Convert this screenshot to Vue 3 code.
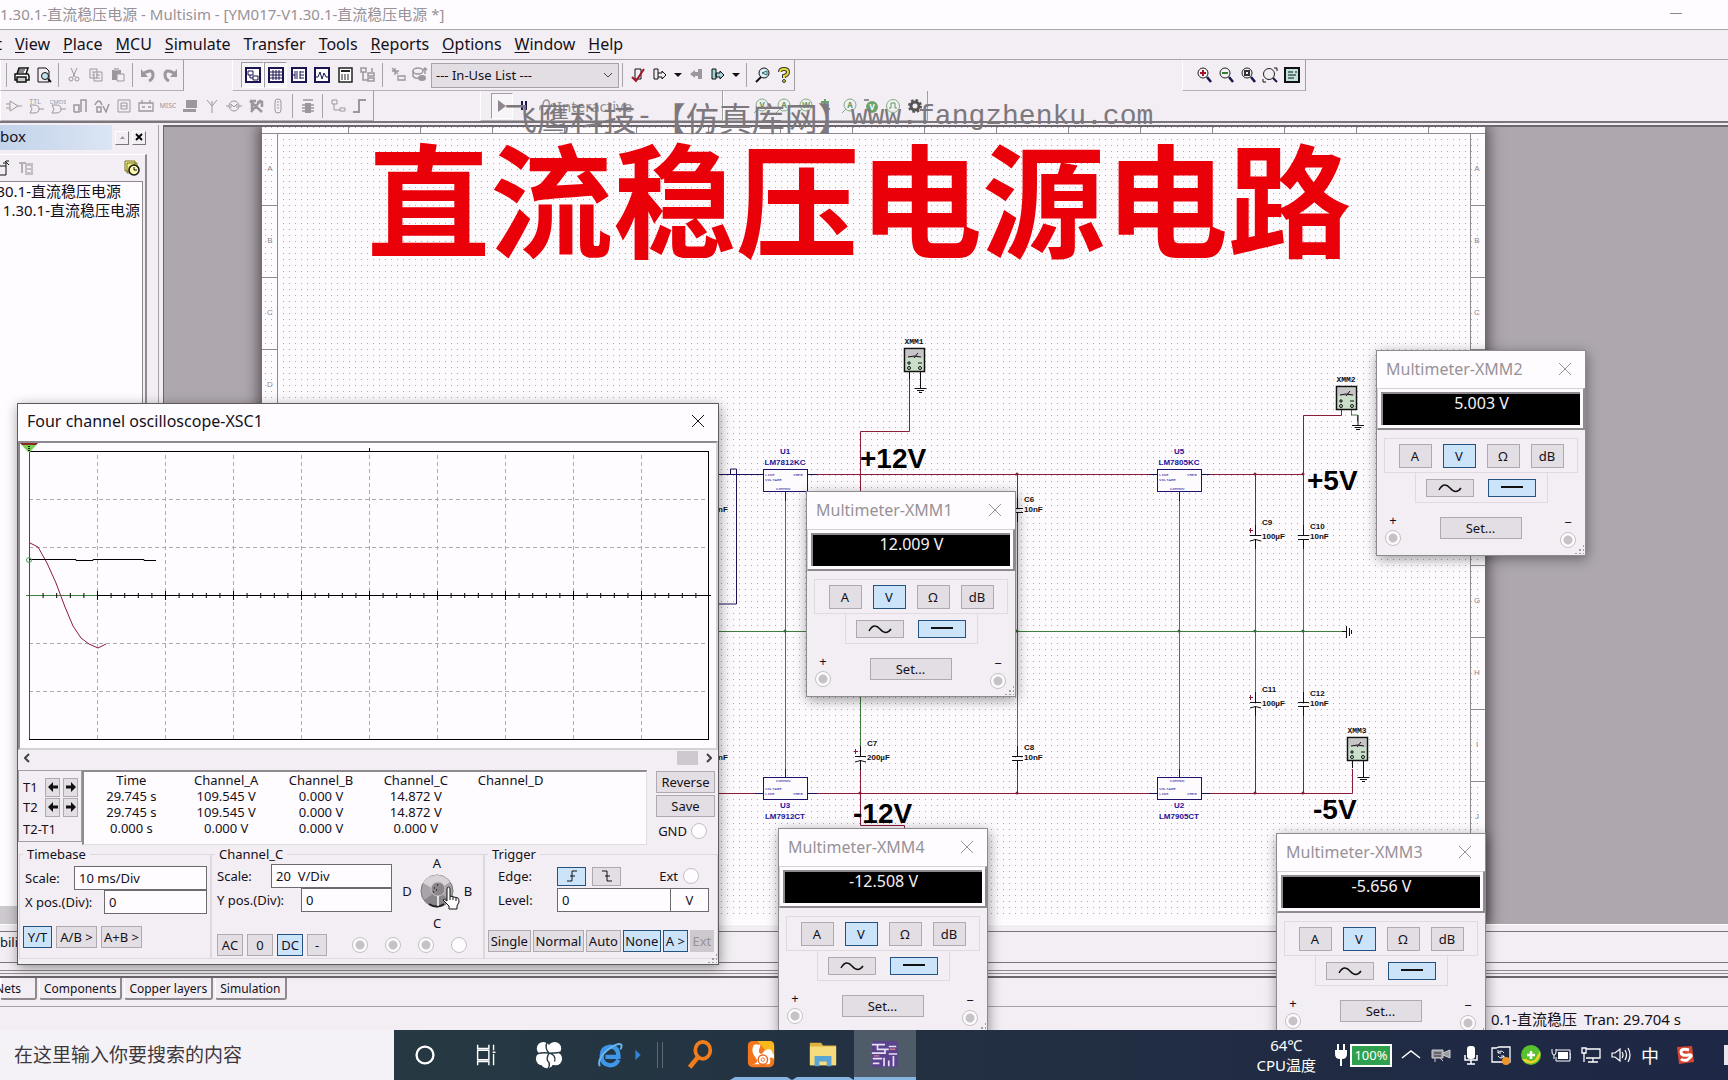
<template>
  <div class="app">
    <!-- title bar -->
    <header class="titlebar">
      <span>1.30.1-直流稳压电源 - Multisim - [YM017-V1.30.1-直流稳压电源 *]</span>
      <button class="minimize" aria-label="Minimize"></button>
    </header>

    <!-- menu -->
    <nav class="menubar">
      <button v-for="item in menus" :key="item[0] + item[1]" class="menu-item">
        {{ item[0] }}<u>{{ item[1] }}</u>{{ item[2] }}
      </button>
    </nav>

    <!-- toolbars -->
    <div class="toolbar-row">
      <div class="toolbar file-bar">
        <template v-for="(name, i) in fileIcons" :key="i">
          <span v-if="name === '|'" class="divider"></span>
          <button v-else class="tool"><svg viewBox="0 0 16 16" v-html="icons[name]"></svg></button>
        </template>
      </div>
      <div class="toolbar main-bar">
        <template v-for="(name, i) in viewIcons" :key="i">
          <span v-if="name === '|'" class="divider"></span>
          <button v-else class="tool" :class="{ pressed: i < 2, wide: i < 7 }"><svg viewBox="0 0 16 16" v-html="icons[name]"></svg></button>
        </template>
        <select class="in-use" aria-label="In-Use List">
          <option>--- In-Use List ---</option>
        </select>
        <template v-for="(name, i) in designIcons" :key="'d' + i">
          <span v-if="name === '|'" class="divider"></span>
          <span v-else-if="name === 'v'" class="caret"></span>
          <button v-else class="tool"><svg viewBox="0 0 16 16" v-html="icons[name]"></svg></button>
        </template>
      </div>
      <div class="toolbar zoom-bar">
        <button v-for="name in zoomIcons" :key="name" class="tool"><svg viewBox="0 0 16 16" v-html="icons[name]"></svg></button>
      </div>
    </div>
    <div class="toolbar-row second">
      <div class="toolbar parts-bar">
        <template v-for="(name, i) in partIcons" :key="i">
          <span v-if="name === '|'" class="divider"></span>
          <button v-else class="tool"><svg viewBox="0 0 16 16" v-html="icons[name]"></svg></button>
        </template>
      </div>
      <div class="toolbar sim-bar">
        <button class="tool pressed"><svg viewBox="0 0 16 16"><path d="M4 2l8 6-8 6z" fill="#8d888d" /></svg></button>
        <button class="tool"><svg viewBox="0 0 16 16"><path d="M5 3h2v9H5zM9 3h2v9H9z" fill="#1a1550" /></svg></button>
        <button class="tool"><svg viewBox="0 0 16 16" v-html="icons.interactive"></svg></button>
        <span class="sim-name">Interactive</span>
      </div>
      <div class="toolbar probe-bar">
        <button v-for="name in probeIcons" :key="name" class="tool"><svg viewBox="0 0 16 16" v-html="icons[name]"></svg></button>
      </div>
    </div>

    <!-- work area -->
    <main class="work">
      <aside class="toolbox">
        <div class="toolbox-head">
          <span class="toolbox-title">box</span>
          <button class="mini"><svg viewBox="0 0 9 9"><path d="M2 6l2.500-3 2.500 3z" fill="#999" /></svg></button>
          <button class="mini"><svg viewBox="0 0 9 9"><path d="M1 1l6 6M7 1l-6 6" stroke="#000" stroke-width="1.800" /></svg></button>
        </div>
        <div class="toolbox-body">
          <div class="toolbox-tools">
            <svg viewBox="0 0 16 16"><path d="M-2 6h8v9h-8M6 6V3h-3M5 1l4 4M6 1h3" fill="none" stroke="#111" /></svg>
            <svg viewBox="0 0 16 16"><path d="M1 3h7M4 3v10" fill="none" stroke="#b3aeb3" stroke-width="2" /><path d="M7 3h8v12H7z" fill="#c3bfc3" /><path d="M9 6h4v2H9zM9 10h4v2H9z" fill="#f2eef3" /></svg>
            <svg class="history" viewBox="0 0 16 16"><path d="M1 1h10v10H1zM3 3h10v10H3z" fill="#f2f08a" stroke="#7a7420" /><circle cx="10" cy="10" r="5" fill="#fbf7b0" stroke="#111" stroke-width="1.500" /><path d="M10 7v3h3" fill="none" stroke="#111" /></svg>
          </div>
          <div class="tree">
            <span class="tree-row first">30.1-直流稳压电源</span>
            <span class="tree-row">1.30.1-直流稳压电源</span>
          </div>
          <div class="tree-scroll"></div>
        </div>
      </aside>

      <section class="canvas">
        <svg class="sheet" viewBox="262 127 1223 797" width="1223" height="797">
          <defs>
            <pattern id="dots" width="6" height="6" patternUnits="userSpaceOnUse">
              <rect x="1" y="1" width="1" height="1" fill="#b3a4b6" />
            </pattern>
          </defs>
          <rect x="262" y="127" width="1223" height="797" fill="#fefbff" />
          <rect x="265" y="127" width="1218" height="792" fill="url(#dots)" />
          <!-- sheet frame -->
          <path d="M277.500 924V133.500H1470.500V924M262 133.500H277M1470 133.500h15" class="frame" />
          <path v-for="n in 16" :key="'c' + n" :d="`M${276.5 + n * 72} 127v6`" class="frame" />
          <template v-for="(letter, n) in rows" :key="letter">
            <path :d="`M262 ${205.5 + n * 72}h15M1470 ${205.5 + n * 72}h15`" class="frame" />
            <text x="270" :y="171 + n * 72" class="mark">{{ letter }}</text>
            <text x="1477" :y="171 + n * 72" class="mark">{{ letter }}</text>
          </template>

          <text x="367" y="248" class="headline">直流稳压电源电路</text>

          <!-- nets -->
          <g class="wire red">
            <path d="M817 474.500h332M1210 474.500h93M860.500 500V431.500h49V372" />
            <path d="M1017.500 474v26M1255.500 474v52M1303.500 526V415.500h38v-6" />
            <path d="M719 793.500h36M817 793.500h332M1210 793.500h142.500V769" />
            <path d="M860.500 768v57.500h44v6M1017.500 768v25M1255.500 714v79M1303.500 714v79" />
          </g>
          <g class="wire green">
            <path d="M719 631.500h624M785.500 500v269M1179.500 500v269" />
            <path d="M860.500 640v107M1017.500 520v227M1255.500 548v146M1303.500 548v146M1351.500 409v6h6v6" />
          </g>
          <g class="wire navy">
            <path d="M719 474.500h44M807 474.500h10M1149 474.500h8M1201 474.500h9M755 793.500h8M807 793.500h10M1149 793.500h8M1201 793.500h9" />
            <path d="M730.500 474v-5h6v135h-18M785.500 492v9M1179.500 492v9M785.500 769v8M1179.500 769v8" />
          </g>
          <g fill="#8b1c3a">
            <circle cx="1017" cy="474" r="1.500" /><circle cx="1255" cy="474" r="1.500" /><circle cx="1303" cy="474" r="1.500" />
            <circle cx="860" cy="793" r="1.500" /><circle cx="1017" cy="793" r="1.500" /><circle cx="1255" cy="793" r="1.500" /><circle cx="1303" cy="793" r="1.500" />
          </g>
          <g fill="#2f6d33">
            <circle cx="785" cy="631" r="1.500" /><circle cx="1017" cy="631" r="1.500" /><circle cx="1179" cy="631" r="1.500" />
            <circle cx="1255" cy="631" r="1.500" /><circle cx="1303" cy="631" r="1.500" />
          </g>
          <path d="M1342 631.500h4M1346.500 626v12M1349.500 628v8M1351.500 630v4" class="wire black" />

          <!-- regulators -->
          <g v-for="u in regulators" :key="u.id" class="regulator">
            <rect :x="u.x - 21.5" :y="u.y - 0.5" width="44" height="22" />
            <template v-if="u.up">
              <text :x="u.x" :y="u.y - 16" class="ref">{{ u.id }}</text>
              <text :x="u.x" :y="u.y - 5" class="ref">{{ u.type }}</text>
              <text :x="u.x - 20" :y="u.y + 6" class="pin">LINE</text>
              <text :x="u.x + 8" :y="u.y + 6" class="pin">VREG</text>
              <text :x="u.x - 20" :y="u.y + 11" class="pin">VOLTAGE</text>
              <text :x="u.x - 9" :y="u.y + 20" class="pin">COMMON</text>
            </template>
            <template v-else>
              <text :x="u.x - 9" :y="u.y + 4" class="pin">COMMON</text>
              <text :x="u.x - 20" :y="u.y + 12" class="pin">VOLTAGE</text>
              <text :x="u.x - 20" :y="u.y + 17" class="pin">LINE</text>
              <text :x="u.x + 8" :y="u.y + 17" class="pin">VREG</text>
              <text :x="u.x" :y="u.y + 30" class="ref">{{ u.id }}</text>
              <text :x="u.x" :y="u.y + 41" class="ref">{{ u.type }}</text>
            </template>
          </g>

          <!-- capacitors -->
          <g v-for="c in capacitors" :key="c.id">
            <path :d="`M${c.x + 0.5} ${c.y - 10}v10M${c.x + 0.5} ${c.y + 4}v10M${c.x - 5} ${c.y + 0.5}h11`" class="wire black" />
            <path v-if="c.polar" :d="`M${c.x - 5} ${c.y + 6}q5.500 -3 11 0`" class="wire black" />
            <path v-else :d="`M${c.x - 5} ${c.y + 4.5}h11`" class="wire black" />
            <path v-if="c.polar" :d="`M${c.x - 6} ${c.y - 4.500}h4M${c.x - 4.5} ${c.y - 7}v5`" class="wire red" />
            <text :x="c.x + 7" :y="c.polar ? c.y - 10 : c.y - 6" class="cap">{{ c.id }}</text>
            <text :x="c.x + 7" :y="c.y + 4" class="cap">{{ c.value }}</text>
          </g>
          <text x="718" y="512" class="cap">nF</text>
          <text x="718" y="760" class="cap">nF</text>

          <!-- multimeter symbols -->
          <g v-for="m in meterSymbols" :key="m.id" :transform="`translate(${m.x} ${m.y})`">
            <text x="10" y="-4" class="meter-ref">{{ m.id }}</text>
            <rect x="0.500" y="0.500" width="20" height="23" fill="#c9dfca" stroke="#111" stroke-width="1.500" />
            <rect x="2" y="2" width="17" height="8" fill="#c8c4c8" />
            <path d="M4 9q6-2 13 0M10 10l4-5M3 15h4M5 13v4M14 15h4" class="wire black" />
            <circle cx="5" cy="20" r="1.500" class="wire black" /><circle cx="16" cy="20" r="1.500" class="wire black" />
            <path v-if="m.bend" d="M22 29v10M16 39.500h12M18.500 41.500h7M20 43.500h4" class="wire black" />
            <path v-else d="M16.500 24v16M5.500 24v7M10.500 40.500h12M13 42.500h7M15 44.500h3" class="wire black" />
          </g>

          <text x="860" y="468" class="volt">+12V</text>
          <text x="1307" y="490" class="volt">+5V</text>
          <text x="853" y="823" class="volt">-12V</text>
          <text x="1313" y="819" class="volt">-5V</text>
        </svg>
      </section>
    </main>

    <!-- bottom area -->
    <div class="spread">
      <span class="spread-tab">bili</span>
    </div>
    <div class="splitter"></div>
    <div class="sheet-tabs">
      <button v-for="tab in tabs" :key="tab" class="sheet-tab">{{ tab }}</button>
    </div>
    <footer class="status">
      <span>0.1-直流稳压</span>
      <span>Tran: 29.704 s</span>
    </footer>

    <!-- taskbar -->
    <div class="taskbar">
      <input class="search" type="text" aria-label="搜索" placeholder="在这里输入你要搜索的内容">
      <button v-for="app in apps" :key="app.name" class="app-btn" :class="[app.name, { open: app.open }]" :aria-label="app.name">
        <svg viewBox="0 0 32 32" v-html="app.icon"></svg>
      </button>
      <div class="tray">
        <div class="cpu"><span>64℃</span><span>CPU温度</span></div>
        <svg class="plug" viewBox="0 0 14 22"><path d="M3 0h2v6h4V0h2v6h2v4q0 5-5 5v7H6v-7q-5 0-5-5V6h2z" fill="#fff" /></svg>
        <div class="battery">100%</div>
        <svg v-for="(icon, i) in trayIcons" :key="i" class="tray-icon" viewBox="0 0 20 20" v-html="icon"></svg>
        <span class="ime">中</span>
        <svg class="sogou" viewBox="0 0 20 20"><path d="M2 2l15-1 2 16-15 2z" fill="#d8452f" /><path d="M14 5q-8-2-8 2t7 3-1 5q-4 1-6-1" fill="none" stroke="#fff" stroke-width="3" /></svg>
        <span class="show-desktop"></span>
      </div>
    </div>

    <!-- oscilloscope -->
    <section class="window scope">
      <div class="win-title">
        <span>Four channel oscilloscope-XSC1</span>
        <button class="close" aria-label="Close"><svg viewBox="0 0 12 12"><path d="M0 0l12 12M12 0L0 12" /></svg></button>
      </div>
      <svg class="screen" viewBox="20 443 696 305">
        <rect x="29.500" y="451.500" width="679" height="288" fill="none" stroke="#000" />
        <g stroke="#b3a9b5" stroke-dasharray="4 3">
          <path v-for="n in 9" :key="'x' + n" :d="`M${29.5 + n * 68} 455v284`" />
          <path v-for="y in [499.5, 547.5, 643.5, 691.5]" :key="y" :d="`M29 ${y}h679`" />
        </g>
        <path d="M97 595.500h614M369.500 448v4" stroke="#000" />
        <path d="M26 595.500h71" stroke="#3f7d3f" />
        <path v-for="n in 49" :key="'t' + n" :d="`M${29.5 + n * 13.6} ${n % 5 ? 593 : 591}v${n % 5 ? 5 : 9}`" stroke="#000" />
        <path d="M29.500 452v287" stroke="#7c2a5c" />
        <path d="M29 543l8 4 9 16 9 20 9 24 8 19 8 12 8 6 9 4 8-4" transform="translate(1 0)" fill="none" stroke="#8b1c3a" />
        <path d="M29 559.500h47v1h17v-1h51v1h12" fill="none" stroke="#000" />
        <circle cx="29" cy="560" r="2.500" fill="none" stroke="#4f9a55" />
        <path d="M20 443h18l-8 9h-2z" fill="#78d04c" /><path d="M20 443h18l-2 2H22z" fill="#8b2a24" /><path d="M29 446v5" stroke="#111" stroke-dasharray="1 1" stroke-width="2" />
      </svg>
      <div class="scrollbar">
        <svg viewBox="0 0 6 10"><path d="M5 1L1 5l4 4" /></svg>
        <span class="thumb"></span>
        <svg viewBox="0 0 6 10"><path d="M1 1l4 4-4 4" /></svg>
      </div>

      <div class="readout">
        <div class="cursors">
          <div v-for="t in ['T1', 'T2']" :key="t" class="cursor-row">
            <span>{{ t }}</span>
            <button class="btn step" :aria-label="t + ' left'"><svg viewBox="0 0 10 10"><path d="M0 5l5-5v3.500h5v3H5V10z" /></svg></button>
            <button class="btn step" :aria-label="t + ' right'"><svg viewBox="0 0 10 10"><path d="M10 5L5 0v3.500H0v3h5V10z" /></svg></button>
          </div>
          <span>T2-T1</span>
        </div>
        <div class="data">
          <table>
            <thead>
              <tr><th v-for="h in headers" :key="h">{{ h }}</th></tr>
            </thead>
            <tbody>
              <tr v-for="(row, i) in readings" :key="i">
                <td v-for="(cell, j) in row" :key="j">{{ cell }}</td>
              </tr>
            </tbody>
          </table>
        </div>
        <div class="side">
          <button class="btn">Reverse</button>
          <button class="btn">Save</button>
          <label class="gnd">GND <input type="radio" name="gnd"></label>
        </div>
      </div>

      <div class="groups">
        <fieldset>
          <legend>Timebase</legend>
          <div class="tb-fields">
            <div class="field"><label for="tb-scale">Scale:</label><input id="tb-scale" class="w-tb" value="10 ms/Div"></div>
            <div class="field"><label for="tb-pos">X pos.(Div):</label><input id="tb-pos" class="w-tb-pos" value="0"></div>
          </div>
          <div class="modes tb-modes">
            <button class="btn on">Y/T</button>
            <button class="btn">A/B &gt;</button>
            <button class="btn">A+B &gt;</button>
          </div>
        </fieldset>

        <fieldset>
          <legend>Channel_C</legend>
          <div class="channel">
            <div class="channel-fields">
              <div class="field"><label for="ch-scale">Scale:</label><input id="ch-scale" class="w-ch" value="20  V/Div"></div>
              <div class="field"><label for="ch-pos">Y pos.(Div):</label><input id="ch-pos" class="w-ch-pos" value="0"></div>
            </div>
            <div class="knob">
              <span class="top">A</span>
              <span class="left">D</span>
              <svg class="dial" viewBox="0 0 34 34">
                <circle cx="17" cy="17" r="16" fill="#a9a4a9" stroke="#777" />
                <path d="M17 17L3 9A16 16 0 0 1 30 8z" fill="#d7d3d7" />
                <path d="M17 17L4 26A16 16 0 0 0 30 26z" fill="#8a858a" />
                <path d="M9 30q8 5 15 0" fill="none" stroke="#222" stroke-width="2" />
                <circle cx="18" cy="15" r="7" fill="#8b868b" stroke="#c9c5c9" />
                <path d="M18 22v10" stroke="#fff" stroke-width="1.500" />
                <path d="M14 14h1M17 11h1M16 16h1M13 18h1" stroke="#222" stroke-width="1.500" />
              </svg>
              <span class="right">B</span>
              <span class="bottom">C</span>
              <svg class="hand" viewBox="0 0 18 24"><path d="M5 14V3q0-2 1.500-2T8 3v7l8 2q1 1 1 4l-2 4v3H7v-3L1 14q1-2 4 1z" fill="#fff" stroke="#111" /><path d="M11 11v3M14 12v3M8 10v4" stroke="#111" /></svg>
            </div>
          </div>
          <div class="modes ch-modes">
            <button class="btn">AC</button>
            <button class="btn">0</button>
            <button class="btn on">DC</button>
            <button class="btn dash">-</button>
            <div class="channel-radios">
              <input v-for="n in 4" :key="n" type="radio" name="channel" :class="{ filled: n < 4 }" :aria-label="'Channel ' + n">
            </div>
          </div>
        </fieldset>

        <fieldset>
          <legend>Trigger</legend>
          <div class="field edge">
            <span class="field-name">Edge:</span>
            <button class="btn on edge-btn" aria-label="Rising"><svg viewBox="0 0 12 12"><path d="M1 11h5V1h5M4 6h5" /></svg></button>
            <button class="btn edge-btn" aria-label="Falling"><svg viewBox="0 0 12 12"><path d="M1 1h5v10h5M4 6h5" /></svg></button>
            <label class="ext">Ext <input type="radio" name="ext"></label>
          </div>
          <div class="field level"><label for="level" class="field-name">Level:</label><input id="level" value="0"><input class="unit" aria-label="Unit" value="V"></div>
          <div class="modes tr-modes">
            <button class="btn">Single</button>
            <button class="btn">Normal</button>
            <button class="btn">Auto</button>
            <button class="btn on">None</button>
            <button class="btn on">A &gt;</button>
            <button class="btn" disabled>Ext</button>
          </div>
        </fieldset>
      </div>
      <span class="grip"></span>
    </section>

    <!-- multimeters -->
    <section v-for="m in meters" :key="m.name" class="window meter" :style="{ left: m.x + 'px', top: m.y + 'px' }">
      <div class="win-title">
        <span>{{ m.name }}</span>
        <button class="close" aria-label="Close"><svg viewBox="0 0 12 12"><path d="M0 0l12 12M12 0L0 12" /></svg></button>
      </div>
      <div class="lcd-frame"><output class="lcd">{{ m.value }}</output></div>
      <div class="units">
        <button v-for="u in ['A', 'V', 'Ω', 'dB']" :key="u" class="btn" :class="{ on: u === 'V' }">{{ u }}</button>
      </div>
      <div class="acdc">
        <button class="btn ac" aria-label="AC"><svg viewBox="0 0 24 10"><path d="M1 7q5-9 11-2t11 0" stroke-width="1.500" /></svg></button>
        <button class="btn on dc" aria-label="DC"><svg viewBox="0 0 24 10"><path d="M1 4h22" stroke-width="2" /></svg></button>
      </div>
      <div class="terminals">
        <label>+<input type="radio" class="filled" :name="m.name + 'p'"></label>
        <button class="btn set">Set...</button>
        <label class="minus">−<input type="radio" class="filled" :name="m.name + 'm'"></label>
      </div>
      <span class="grip"></span>
    </section>

    <div class="watermark"><span class="cjk">飞鹰科技</span><span class="latin">-</span><span class="cjk">【仿真库网】</span><span class="latin">www.fangzhenku.com</span></div>
  </div>
</template>

<script setup>
import { ref } from 'vue'

const menus = [
  ['t', '', ''],
  ['', 'V', 'iew'],
  ['', 'P', 'lace'],
  ['', 'M', 'CU'],
  ['', 'S', 'imulate'],
  ['Tra', 'n', 'sfer'],
  ['', 'T', 'ools'],
  ['', 'R', 'eports'],
  ['', 'O', 'ptions'],
  ['', 'W', 'indow'],
  ['', 'H', 'elp']
]

const rows = ['A', 'B', 'C', 'D', 'E', 'F', 'G', 'H', 'I', 'J']
const tabs = ['Nets', 'Components', 'Copper layers', 'Simulation']

// toolbar icons, 16x16
const line = (d, color = '#111', extra = '') => `<path d="${d}" fill="none" stroke="${color}" ${extra}/>`
const gray = '#9c979c'
const boxed = (d) => `<rect x="1" y="1" width="14" height="14" fill="#fff" stroke="#1a1550" stroke-width="2"/>` + line(d, '#1a1550')
const lens = (d, color) => `<circle cx="7" cy="6" r="5" fill="#f5f5f5" stroke="#222"/>` + line('M11 10l4 5', '#1a1550', 'stroke-width="2.500"') + line(d, color, 'stroke-width="2"')
const probe = (ch) => `<circle cx="9" cy="7" r="6" fill="none" stroke="#7fae80"/>` + line('M5 11l-4 4', '#7fae80') + `<text x="9" y="10" font-size="8" font-weight="bold" text-anchor="middle" fill="#5c9a5e">${ch}</text>`

const icons = {
  print: '<path d="M5 1h9l-2 6H3zM1 7h13l1 2v4H1z" fill="#fff" stroke="#111" stroke-width="1.500"/><path d="M5 3h6M4 5h6" stroke="#111"/><path d="M3 10h9v5H3z" fill="#ccc" stroke="#111" stroke-width="1.500"/>',
  preview: line('M2 1h8l3 3v11H2z') + '<circle cx="9" cy="9" r="3.500" fill="#bfe3e8" stroke="#111"/>' + line('M12 12l3 3', '#111', 'stroke-width="2"'),
  cut: line('M5 1l4 9M11 1L7 10', gray) + `<circle cx="5" cy="12" r="2" fill="none" stroke="${gray}"/><circle cx="11" cy="12" r="2" fill="none" stroke="${gray}"/>`,
  copy: line('M2 2h7v9H2zM6 5h8v9H6zM4 5h2M4 8h2M8 8h4M8 11h4', gray),
  paste: `<path d="M2 3h9v10H2z" fill="${gray}"/><path d="M4 1h5v3H4z" fill="#bbb"/><path d="M7 7h7v7H7z" fill="#f2eef3" stroke="${gray}"/>`,
  undo: line('M4 6q9-5 9 2 0 4-4 6', gray, 'stroke-width="3"') + `<path d="M1 2v8h7z" fill="${gray}"/>`,
  redo: line('M12 6q-9-5-9 2 0 4 4 6', gray, 'stroke-width="3"') + `<path d="M15 2v8H8z" fill="${gray}"/>`,
  design: boxed('M3 4h5v4H3zM8 9h5v4H8zM5 8v3h3'),
  grid: boxed('M2 5h12M2 8h12M2 11h12M5 3v10M8 3v10M11 3v10'),
  spice: boxed('M4 4v8M6 4v8M9 4v8M9 5h4M9 8h4M9 11h4M2 8h2'),
  graph: boxed('M2 10h2l2-5 2 7 2-6 2 4h2'),
  post: '<rect x="2" y="1" width="13" height="14" fill="#fff" stroke="#222" stroke-width="1.500"/>' + line('M4 4h9', '#222', 'stroke-width="2"') + line('M4 8h9M4 10h9M4 12h9', '#222', 'stroke-dasharray="2 1"'),
  parent: line('M1 1h5v4H1zM8 6h6v3H8zM8 11h6v3H8zM3 5v8h5M12 5V1', gray, 'stroke-width="1.500"'),
  wand: line('M2 4h7M5 1v7M2 1l6 6M8 9h7v4H8z', gray, 'stroke-width="1.300"'),
  database: `<ellipse cx="6" cy="4" rx="5" ry="3" fill="none" stroke="${gray}" stroke-width="1.500"/><ellipse cx="10" cy="11" rx="4" ry="3" fill="${gray}"/>` + line('M1 4v5q2 3 5 2M13 7V1M11 3l2-2 2 2', gray, 'stroke-width="1.500"'),
  erc: line('M5 2h6v10H5V2') + line('M2 10l4 4 8-12', '#a3142a', 'stroke-width="2"'),
  toUlti: line('M2 2h4v10H2zM6 6h4V4l4 4-4 4v-2H6'),
  back: `<path d="M14 2h-4v3H7V3L2 7l5 4V9h3v3h4z" fill="${gray}"/>`,
  forward: '<path d="M2 2h4v10H2zM6 6h4V4l4 4-4 4v-2H6z" fill="#9fd4d8" stroke="#111"/>',
  find: '<circle cx="10" cy="6" r="5" fill="#dff0f2" stroke="#111"/>' + line('M7 10l-5 5', '#111', 'stroke-width="2"') + line('M8 6l5-2v4z', '#2a6470'),
  help: line('M4 5q0-3 4-3t4 3-4 4v2', '#333', 'stroke-width="4"') + line('M4 5q0-3 4-3t4 3-4 4v2', '#e6dc3c', 'stroke-width="2"') + '<circle cx="8" cy="14" r="1.500" fill="#e6dc3c" stroke="#333"/>',
  zoomIn: lens('M4 6h6M7 3v6', '#a3142a'),
  zoomOut: lens('M4 6h6', '#2f7d33'),
  zoomArea: lens('M5 4h4v4H5z', '#333'),
  zoomFit: '<circle cx="7" cy="7" r="5.500" fill="none" stroke="#222"/>' + line('M11 11l4 4', '#1a1550', 'stroke-width="2"') + line('M12 1h3v3M1 12v3h3'),
  full: '<rect x="1" y="1" width="14" height="14" fill="#bfe3df" stroke="#111" stroke-width="2"/>' + line('M4 5h5M4 8h8M4 11h6M11 5h2'),
  opamp: line('M0 6h4M0 10h4M4 3l8 5-8 5zM12 8h4', gray),
  ttl: line('M2 7h4q5 0 5 4t-5 4H2l2-4zM11 11h5', gray) + `<text x="7" y="6" font-size="7" text-anchor="middle" fill="${gray}">TTL</text>`,
  cmos: line('M2 7h4q5 0 5 4t-5 4H2l2-4zM11 11h5', gray) + `<text x="8" y="6" font-size="6" text-anchor="middle" fill="${gray}">CMOS</text>`,
  digital: line('M2 14V7h5v7H2M9 14V2h5v12', gray, 'stroke-width="1.500"'),
  mixed: line('M1 7q4-8 7 0M3 9h4v5H3zM9 8l3 6 3-8', gray, 'stroke-width="1.500"'),
  indicator: line('M2 2h12v12H2zM5 5h6v6H5zM5 8h6', gray),
  power: line('M1 5h14v8H1zM4 5V2M12 5V2M4 9h3M10 9h3', gray, 'stroke-width="1.300"'),
  misc: `<text x="8" y="10" font-size="7" text-anchor="middle" fill="${gray}">MISC</text>`,
  peripheral: `<path d="M4 2h11v8H4zM1 11h13v3H1z" fill="${gray}"/>`,
  rf: line('M8 15V3M8 8L3 2M8 8l5-6', gray),
  motor: `<circle cx="8" cy="8" r="5" fill="none" stroke="${gray}"/>` + line('M0 8h3M13 8h3M5 10V6l3 3 3-3v4', gray),
  ni: line('M2 3l12 11M13 2L3 14M2 3h6M9 4h5v5M4 6v7', gray, 'stroke-width="2.500"'),
  connector: `<rect x="5" y="1" width="6" height="14" rx="3" fill="none" stroke="${gray}"/>` + line('M7 4h2M7 7h2M7 10h2', gray),
  mcu: `<path d="M5 5h6v10H5z" fill="${gray}"/>` + line('M2 7h12M2 10h12M2 13h12M3 2h10', gray, 'stroke-width="1.500"'),
  hier: line('M2 2h5v4H2zM10 10h5v3h-5zM4 6v6h6', gray),
  bus: line('M1 14h6V2h7', gray, 'stroke-width="2"'),
  interactive: line('M2 12q-1-4 3-5 0-5 4-5 3 1 2 5M8 13l6-7', gray, 'stroke-width="1.500"'),
  pv: probe('V'),
  pa: probe('A'),
  pw: probe('W'),
  pdiff: line('M2 4h8M6 1v6M5 11h6', '#6ba36d', 'stroke-width="2"'),
  pva: probe('A'),
  pref: '<circle cx="9" cy="9" r="6" fill="#6ba36d"/><text x="9" y="12" font-size="8" font-weight="bold" text-anchor="middle" fill="#fff">V</text>' + line('M1 2h5', '#333'),
  pdig: '<circle cx="8" cy="8" r="6.500" fill="none" stroke="#7fae80"/>' + line('M4 10h2V5h4v5h2', '#5c9a5e'),
  gear: '<circle cx="8" cy="8" r="4" fill="none" stroke="#555" stroke-width="3"/><circle cx="8" cy="8" r="6" fill="none" stroke="#555" stroke-width="2" stroke-dasharray="2.500 2.200"/>'
}

const fileIcons = ['|', 'print', 'preview', '|', 'cut', 'copy', 'paste', '|', 'undo', 'redo']
const viewIcons = ['design', 'grid', 'spice', 'graph', 'post', 'parent', '|', 'wand', 'database']
const designIcons = ['|', 'erc', 'toUlti', 'v', 'back', 'forward', 'v', '|', 'find', 'help']
const zoomIcons = ['zoomIn', 'zoomOut', 'zoomArea', 'zoomFit', 'full']
const partIcons = ['opamp', 'ttl', 'cmos', 'digital', 'mixed', 'indicator', 'power', 'misc', 'peripheral', 'rf', 'motor', 'ni', 'connector', '|', 'mcu', '|', 'hier', 'bus']
const probeIcons = ['pv', 'pa', 'pw', 'pdiff', 'pva', 'pref', 'pdig', 'gear']

// schematic parts
const regulators = [
  { id: 'U1', type: 'LM7812KC', x: 785, y: 470, up: true },
  { id: 'U5', type: 'LM7805KC', x: 1179, y: 470, up: true },
  { id: 'U3', type: 'LM7912CT', x: 785, y: 778, up: false },
  { id: 'U2', type: 'LM7905CT', x: 1179, y: 778, up: false }
]
const capacitors = [
  { id: 'C6', value: '10nF', x: 1017, y: 508 },
  { id: 'C8', value: '10nF', x: 1017, y: 756 },
  { id: 'C7', value: '200µF', x: 860, y: 756, polar: true },
  { id: 'C9', value: '100µF', x: 1255, y: 535, polar: true },
  { id: 'C10', value: '10nF', x: 1303, y: 535 },
  { id: 'C11', value: '100µF', x: 1255, y: 702, polar: true },
  { id: 'C12', value: '10nF', x: 1303, y: 702 }
]
const meterSymbols = [
  { id: 'XMM1', x: 904, y: 348 },
  { id: 'XMM2', x: 1336, y: 386, bend: true },
  { id: 'XMM3', x: 1347, y: 737 }
]

const headers = ['Time', 'Channel_A', 'Channel_B', 'Channel_C', 'Channel_D']
const readings = ref([
  ['29.745 s', '109.545 V', '0.000 V', '14.872 V', ''],
  ['29.745 s', '109.545 V', '0.000 V', '14.872 V', ''],
  ['0.000 s', '0.000 V', '0.000 V', '0.000 V', '']
])

const meters = ref([
  { name: 'Multimeter-XMM1', value: '12.009 V', x: 806, y: 491 },
  { name: 'Multimeter-XMM2', value: '5.003 V', x: 1376, y: 350 },
  { name: 'Multimeter-XMM3', value: '-5.656 V', x: 1276, y: 833 },
  { name: 'Multimeter-XMM4', value: '-12.508 V', x: 778, y: 828 }
])

const apps = [
  { name: 'cortana', icon: '<circle cx="16" cy="16" r="9" fill="none" stroke="#fff" stroke-width="2.500"/>' },
  { name: 'taskview', icon: '<path d="M6 5v4h12V5M6 11h12v10H6zM6 27v-4h12v4M23 5v6M23 15v12M22 13h3" fill="none" stroke="#fff" stroke-width="1.500"/>' },
  { name: 'pinwheel', icon: '<g fill="#fff"><circle cx="10" cy="9" r="7"/><circle cx="22" cy="9" r="7"/><circle cx="9" cy="20" r="7"/><circle cx="23" cy="20" r="7"/><circle cx="14" cy="23" r="7"/><circle cx="16" cy="15" r="7"/></g><path d="M14 2q-3 7 2 12 6 0 13-1M16 14q-6-1-14 1M16 14q-4 7 0 10 1 4-1 6M16 14q8 2 6 9" fill="none" stroke="#253742" stroke-width="1.500"/>' },
  { name: 'ie', icon: '<path d="M24 21q-3 6-9 6-9-1-9-10t9-10q9 0 9 11H10" fill="none" stroke="#3f97ea" stroke-width="4.500"/><path d="M4 28q-3-8 8-17T27 5q1 2-1 5" fill="none" stroke="#69b6f5" stroke-width="2"/>' },
  { name: 'more', icon: '<path d="M13 10l6 6-6 6z" fill="#2f83d8"/>' },
  { name: 'everything', icon: '<ellipse cx="19" cy="11" rx="8" ry="9" fill="none" stroke="#f07c1c" stroke-width="4"/><path d="M14 18L5 29" stroke="#f07c1c" stroke-width="5"/>' },
  { name: 'uc', open: true, icon: '<rect x="2" y="2" width="28" height="28" rx="5" fill="#f4761c"/><path d="M12 2h13q5 0 5 5v16z" fill="#f9b81c"/><path d="M6 27q8-1 5-6-5-6-4-11 1-6 6-4 4-1 1 5-1 5 3 5 2-4 6-5t5 3q2 2 2 6h-5q2 3 0 7H6z" fill="#fff"/><circle cx="18" cy="22" r="5" fill="#fff" stroke="#f0641c" stroke-width="1.500"/><circle cx="18" cy="22" r="1.800" fill="none" stroke="#f0641c"/>' },
  { name: 'explorer', open: true, icon: '<path d="M2 4h12l2 3h14v21H2z" fill="#e0b040"/><path d="M2 8h28v20H2z" fill="#f7dc7e"/><path d="M7 29V18h18v11h-5v-5h-8v5z" fill="#5aa5d6"/>' },
  { name: 'multisim', open: true, icon: '<rect x="2" y="2" width="28" height="28" rx="3" fill="#5b428c"/><path d="M2 6h14M8 6v5h12M2 15h14v-4M20 8h8M20 16h9M3 21h10M3 26h7M15 29v-9M20 29v-6M25 29V18" fill="none" stroke="#e8e0f5" stroke-width="1.800"/><path d="M21 11h6M4 18h6" stroke="#d17a8e" stroke-width="1.500"/>' }
]

const trayIcons = [
  '<path d="M1 13l9-7 9 7" fill="none" stroke="#fff" stroke-width="1.500"/>',
  '<path d="M1 5h11v8H1zM12 8l7-3v8l-7-3M4 13v4M9 13l3 3" fill="#9a9aa2" stroke="#cfcfd4"/><path d="M3 8h7M3 11h7" stroke="#333"/>',
  '<rect x="6" y="1" width="8" height="13" rx="3" fill="#fff"/><path d="M4 10v5h12v-5M10 15v4M6 19h8" fill="none" stroke="#fff" stroke-width="1.500"/>',
  '<path d="M1 3h4l3-1h11v15H1z" fill="none" stroke="#fff" stroke-width="1.300"/><path d="M7 8q3-4 6 0M13 11q-3 4-6 0M7 5v3h3M13 14v-3h-3" fill="none" stroke="#fff"/><circle cx="15" cy="16" r="4" fill="#f0952c"/>',
  '<circle cx="10" cy="10" r="10" fill="#58c12e"/><path d="M1 14A10 10 0 0 0 19 6q-3 9-18 8z" fill="#f7cf2c"/><circle cx="10" cy="10" r="6" fill="#58c12e"/><path d="M10 6v8M6 10h8" stroke="#fff" stroke-width="2.500"/>',
  '<path d="M7 7h10v7H7z" fill="#fff"/><path d="M5 5h14v11H5v-4M19 9h1v4h-1M1 4v3q0 3 2 3t2-3V4M3 10v4" fill="none" stroke="#fff"/>',
  '<path d="M5 4h14v9H5M12 13v4M7 17h10M1 3h4v5H1zM3 8v9" fill="none" stroke="#fff" stroke-width="1.300"/>',
  '<path d="M1 8h3l5-4v12l-5-4H1z" fill="none" stroke="#fff" stroke-width="1.200"/><path d="M11 7q2 3 0 6M14 5q3 5 0 10M17 3q4 7 0 14" fill="none" stroke="#fff" stroke-width="1.200"/>'
]
</script>

<style>
html,
body {
  background: #f2eef3;
  overflow: hidden;
}
</style>

<style scoped>
* {
  box-sizing: border-box;
}

.app {
  position: relative;
  height: 100vh;
  display: flex;
  flex-direction: column;
  overflow: hidden;
  background: #f2eef3;
  color: #15101a;
  font-family: "Noto Sans", "Noto Sans CJK SC", sans-serif;
  font-size: 12px;
}

button,
input,
select {
  font: inherit;
  color: inherit;
}

button {
  padding: 0;
  border: none;
  background: none;
}

svg {
  display: block;
}

/* title and menu */
.titlebar {
  height: 30px;
  flex-shrink: 0;
  display: flex;
  align-items: center;
  justify-content: space-between;
  padding-bottom: 2px;
  background: #fefcff;
  border-bottom: 1px solid #aba6ab;
  color: #979297;
  font-size: 15px;
  white-space: nowrap;
}

.minimize {
  width: 12px;
  height: 1px;
  margin-right: 46px;
  background: #8c878c;
}

.menubar {
  height: 30px;
  flex-shrink: 0;
  display: flex;
  align-items: center;
  gap: 13px;
  padding-bottom: 2px;
  border-bottom: 1px solid #aba6ab;
  font-size: 16px;
}

.menu-item:first-child {
  width: 2px;
  display: flex;
  justify-content: flex-end;
}

.menu-item u {
  text-underline-offset: 2px;
}

/* toolbars */
.toolbar-row {
  height: 31px;
  flex-shrink: 0;
  display: flex;
}

.toolbar-row.second {
  height: 32px;
  border-bottom: 2px solid #7b767b;
}

.toolbar {
  display: flex;
  align-items: center;
  border-right: 1px solid #a29da2;
  border-bottom: 1px solid #b5b0b5;
  border-left: 1px solid #fff;
}

.file-bar {
  width: 184px;
  padding-left: 2px;
}

.main-bar {
  width: 563px;
  margin-left: 48px;
  padding-left: 8px;
}

.zoom-bar {
  width: 124px;
  margin-left: 387px;
  padding-left: 10px;
}

.parts-bar {
  width: 374px;
  padding-left: 2px;
}

.sim-bar {
  width: 243px;
  margin-left: 106px;
  padding-left: 10px;
}

.probe-bar {
  width: 205px;
  padding-left: 26px;
}

.tool {
  width: 22px;
  height: 26px;
  flex-shrink: 0;
  display: flex;
  align-items: center;
  justify-content: center;
}

.tool.wide {
  width: 23px;
}

.tool svg {
  width: 16px;
  height: 16px;
}

.tool.pressed {
  border: 1px solid #a29da2;
  border-right-color: #fff;
  border-bottom-color: #fff;
  background: #f8f5f9;
}

.divider {
  width: 1px;
  height: 24px;
  margin: 0 4px 0 3px;
  flex-shrink: 0;
  background: #a8a3a8;
}

.caret {
  width: 0;
  margin: 0 3px;
  border: 4px solid transparent;
  border-top-color: #111;
  border-bottom-width: 0;
}

.in-use {
  width: 188px;
  height: 25px;
  flex-shrink: 0;
  padding: 0 4px;
  border: 1px solid #a8a3a8;
  border-radius: 0;
  appearance: none;
  font-size: 13px;
  background-color: #e2dee3;
  background-image: url("data:image/svg+xml,%3Csvg xmlns='http://www.w3.org/2000/svg' width='10' height='6'%3E%3Cpath d='M1 1l4 4 4-4' fill='none' stroke='%23444'/%3E%3C/svg%3E");
  background-repeat: no-repeat;
  background-position: right 5px center;
}

.sim-name {
  color: #938e93;
  font-size: 15px;
}

/* work area */
.work {
  flex: 1;
  min-height: 0;
  display: flex;
  margin-top: 2px;
}

.toolbox {
  width: 159px;
  flex-shrink: 0;
  display: flex;
  flex-direction: column;
  border-right: 1px solid #a8a3a8;
}

.toolbox-head {
  height: 25px;
  display: flex;
  align-items: center;
  gap: 3px;
  padding-right: 12px;
}

.toolbox-title {
  flex: 1;
  height: 25px;
  line-height: 22px;
  font-size: 15px;
  background: linear-gradient(90deg, #c3d3ea, #dbe5f4);
}

.mini {
  width: 14px;
  height: 14px;
  display: flex;
  align-items: center;
  justify-content: center;
  border: 1px solid #fff;
  border-right-color: #777;
  border-bottom-color: #777;
}

.mini svg {
  width: 9px;
  height: 9px;
}

.toolbox-body {
  width: 147px;
  flex: 1;
  min-height: 0;
  display: flex;
  flex-direction: column;
  margin-top: 4px;
  border-top: 1px solid #fff;
  border-right: 2px solid #8f8a8f;
}

.toolbox-tools {
  height: 26px;
  display: flex;
  align-items: center;
  gap: 2px;
  padding-right: 5px;
}

.toolbox-tools svg {
  width: 16px;
  height: 16px;
}

.toolbox-tools .history {
  margin-left: auto;
}

.tree {
  flex: 1;
  margin-right: 2px;
  border-top: 1px solid #8f8a8f;
  border-right: 1px solid #8f8a8f;
  background: #fefcff;
  font-size: 15px;
  line-height: 19px;
  overflow: hidden;
}

.tree-row {
  display: flex;
  justify-content: flex-end;
  padding-right: 2px;
  white-space: nowrap;
}

.tree-row.first {
  padding-right: 21px;
}

.tree-scroll {
  height: 18px;
  background: #cdc9ce;
}

.canvas {
  flex: 1;
  min-width: 0;
  margin-left: 4px;
  padding-left: 98px;
  border-top: 2px solid #6b666b;
  border-left: 1px solid #6b666b;
  background: #aea8ae;
  overflow: hidden;
}

.sheet {
  box-shadow: 0 0 14px 3px rgba(50, 40, 50, 0.75);
}

.frame {
  fill: none;
  stroke: #8f8a8f;
}

.mark {
  fill: #8f8a8f;
  font: 8px "Liberation Sans", sans-serif;
  text-anchor: middle;
}

.headline {
  fill: #ea0008;
  font: bold 123px "Noto Sans CJK SC", sans-serif;
}

.wire {
  fill: none;
  stroke-width: 1;
}

.wire.red {
  stroke: #8b1c3a;
}

.wire.green {
  stroke: #3f7d3f;
}

.wire.navy {
  stroke: #1d1158;
}

.wire.black {
  stroke: #111;
}

.regulator rect {
  fill: #fefbff;
  stroke: #1d1170;
}

.regulator text {
  fill: #21159a;
}

.ref {
  font: bold 8px "Liberation Sans", sans-serif;
  text-anchor: middle;
}

.pin {
  font: 4px "Liberation Mono", monospace;
}

.cap {
  fill: #111;
  font: bold 8px "Liberation Sans", sans-serif;
}

.meter-ref {
  fill: #111;
  font: bold 8px "Liberation Mono", monospace;
  text-anchor: middle;
}

.volt {
  fill: #000;
  font: bold 28px "Liberation Sans", sans-serif;
}

/* bottom area */
.spread {
  height: 39px;
  flex-shrink: 0;
  padding-top: 6px;
  border-top: 1px solid #fff;
  border-bottom: 1px solid #7b767b;
}

.spread-tab {
  display: block;
  height: 21px;
  border-top: 1px solid #7b767b;
  font-size: 13px;
  line-height: 20px;
}

.splitter {
  height: 14px;
  flex-shrink: 0;
  margin-top: 1px;
  border-top: 6px solid #f2eef3;
  border-bottom: 2px solid #6b666b;
  background: linear-gradient(#8f8a8f 1px, #f2eef3 1px 3px, #8f8a8f 3px 4px, #f2eef3 4px);
}

.sheet-tabs {
  height: 29px;
  flex-shrink: 0;
  display: flex;
  align-items: flex-start;
  gap: 2px;
  border-bottom: 1px solid #a8a3a8;
}

.sheet-tab {
  height: 22px;
  padding: 0 4px;
  border: 1px solid #fff;
  border-top: none;
  border-right: 2px solid #8f8a8f;
  border-bottom: 2px solid #8f8a8f;
  border-radius: 0 0 3px 3px;
  font-size: 12px;
}

.sheet-tab:first-child {
  width: 37px;
  display: flex;
  align-items: center;
  justify-content: flex-end;
  padding-right: 14px;
}

.status {
  height: 23px;
  flex-shrink: 0;
  display: flex;
  align-items: center;
  justify-content: flex-end;
  gap: 7px;
  padding-right: 47px;
  font-size: 15px;
}

/* taskbar */
.taskbar {
  position: relative;
  z-index: 10;
  height: 50px;
  flex-shrink: 0;
  display: flex;
  align-items: center;
  background: linear-gradient(90deg, #263a42 20%, #222e42 60%, #1e2745);
  color: #fff;
}

.search {
  width: 394px;
  height: 50px;
  padding: 0 14px;
  border: none;
  border-radius: 0;
  background: #f5f2f7;
  color: #333;
  font-size: 19px;
}

.search::placeholder {
  color: #3d383d;
  opacity: 1;
}

.app-btn {
  width: 62px;
  height: 50px;
  display: flex;
  align-items: center;
  justify-content: center;
}

.app-btn svg {
  width: 30px;
  height: 30px;
}

.app-btn.more {
  width: 28px;
  margin: 0 0 0 -18px;
}

.app-btn.more + .app-btn {
  margin-left: 16px;
}

.app-btn.more + .app-btn::before {
  content: "";
  width: 4px;
  height: 26px;
  margin-left: -26px;
  margin-right: 22px;
  border: solid #5d6a72;
  border-width: 0 1px;
}

.app-btn.open {
  border-bottom: 3px solid #86b5e3;
  border-left: 5px solid transparent;
  border-right: 5px solid transparent;
  background-clip: padding-box;
}

.app-btn.multisim {
  border-left: none;
  border-right: none;
  background: #505b69;
}

.tray {
  margin-left: auto;
  display: flex;
  align-items: center;
}

.cpu {
  display: flex;
  flex-direction: column;
  align-items: center;
  margin-right: 18px;
  font-size: 15px;
  line-height: 20px;
}

.plug {
  width: 14px;
  height: 22px;
}

.battery {
  width: 42px;
  height: 23px;
  margin: 0 9px 0 2px;
  border: 2px solid #fff;
  background: #2fa04e;
  font-size: 13px;
  line-height: 19px;
  text-align: center;
}

.tray-icon {
  width: 20px;
  height: 20px;
  margin-right: 10px;
}

.ime {
  font-size: 18px;
  margin: 0 16px 0 0;
}

.sogou {
  width: 20px;
  height: 20px;
}

.show-desktop {
  width: 4px;
  height: 20px;
  margin-left: 29px;
  background: #e8e6ee;
}

/* floating windows */
.window {
  position: absolute;
  border: 1px solid #8f8a8f;
  background: #f2eef3;
  box-shadow: 1px 3px 12px rgba(0, 0, 0, 0.4);
  font-size: 13px;
}

.win-title {
  height: 37px;
  display: flex;
  align-items: center;
  justify-content: space-between;
  padding: 0 14px 2px 9px;
  background: #fefcff;
}

.close svg {
  width: 12px;
  height: 12px;
  stroke: currentColor;
}

.btn {
  height: 22px;
  display: flex;
  align-items: center;
  justify-content: center;
  border: 1px solid #aeaaae;
  background: #e2dee3;
  line-height: 16px;
}

.btn.on {
  border-color: #24537f;
  background: #cce4fa;
}

.btn:disabled {
  border-color: #ccc8cd;
  background: #cdc9ce;
  color: #989398;
}

.btn svg {
  fill: none;
  stroke: #111;
}

input[type="radio"] {
  width: 16px;
  height: 16px;
  margin: 0;
  appearance: none;
  border: 1px solid #c3bfc3;
  border-radius: 50%;
  background: #fefcff;
}

input[type="radio"].filled {
  background: radial-gradient(circle, #c6c2c6 4px, #fefcff 5px);
}

.grip {
  position: absolute;
  right: 1px;
  bottom: 1px;
  width: 10px;
  height: 10px;
  background: radial-gradient(circle, #a29da2 1px, transparent 1px) 0 0 / 4px 4px;
  clip-path: polygon(100% 0, 100% 100%, 0 100%);
}

/* oscilloscope */
.scope {
  left: 17px;
  top: 403px;
  width: 702px;
  border-color: #5f5a5f;
}

.scope .win-title {
  padding-bottom: 3px;
  font-size: 16px;
}

.screen {
  width: 700px;
  height: 309px;
  border: 2px solid #8f8a8f;
  border-right-color: #d5d1d6;
  border-bottom-color: #d5d1d6;
  background: #fefcff;
}

.scrollbar {
  height: 17px;
  display: flex;
  align-items: center;
  padding: 0 6px 2px;
}

.scrollbar svg {
  width: 6px;
  height: 10px;
  fill: none;
  stroke: #444;
  stroke-width: 2;
}

.thumb {
  width: 21px;
  height: 14px;
  margin: 0 8px 0 auto;
  background: #cdc9ce;
}

.readout {
  height: 75px;
  display: flex;
  margin-top: 3px;
}

.cursors {
  width: 64px;
  height: 72px;
  padding: 6px 0 0 4px;
  border: 1px solid #a29da2;
}

.cursor-row {
  height: 20px;
  display: flex;
  align-items: center;
  gap: 3px;
}

.cursor-row span {
  width: 19px;
}

.cursors > span {
  line-height: 24px;
}

.step {
  width: 15px;
  height: 19px;
}

.step svg {
  width: 10px;
  height: 10px;
  fill: #111;
  stroke: none;
}

.data {
  flex: 1;
  border: 1px solid #e0dce1;
  border-top: 2px solid #8f8a8f;
  border-left: 2px solid #8f8a8f;
  background: #fefcff;
}

.data table {
  width: 474px;
  table-layout: fixed;
  border-collapse: collapse;
}

.data th,
.data td {
  padding: 0;
  font-weight: normal;
  line-height: 16px;
  text-align: center;
}

.side {
  width: 59px;
  display: flex;
  flex-direction: column;
  gap: 2px;
  margin: 1px 3px 0 9px;
}

.gnd {
  display: flex;
  align-items: center;
  justify-content: flex-end;
  gap: 4px;
  padding: 3px 8px 0 0;
}

.groups {
  display: grid;
  grid-template-columns: 192px 273px 1fr;
  margin-top: 1px;
  padding: 0 0 5px 1px;
}

fieldset {
  min-width: 0;
  height: 113px;
  margin: 0;
  padding: 2px 3px 0 5px;
  border: 1px solid #dcd8dd;
}

legend {
  padding: 0 4px;
  margin-left: -2px;
  line-height: 16px;
}

.field {
  height: 24px;
  display: flex;
  align-items: center;
  justify-content: space-between;
  white-space: nowrap;
}

.field input:not([type="radio"]) {
  height: 24px;
  padding: 0 4px;
  border: 1px solid #6f6a6f;
  border-radius: 0;
  background: #fefcff;
  white-space: pre;
}

.tb-fields {
  padding: 2px 0 0;
}

.w-tb {
  width: 133px;
}

.w-tb-pos {
  width: 103px;
}

.w-ch {
  width: 121px;
}

.w-ch-pos {
  width: 91px;
}

.modes {
  display: flex;
  gap: 4px;
}

.tb-modes {
  margin: 12px 0 0 -2px;
}

.tb-modes .btn {
  width: 41px;
}

.tb-modes .btn.on {
  width: 29px;
}

.channel {
  display: flex;
}

.channel-fields {
  width: 175px;
}

.knob {
  position: relative;
  height: 68px;
  display: grid;
  grid-template-columns: 16px 44px 18px;
  grid-template-rows: 8px 38px 22px;
  align-items: center;
  justify-items: center;
  margin-left: 7px;
}

.knob .top {
  grid-area: 1 / 2;
  align-self: end;
}

.knob .left {
  grid-area: 2 / 1;
}

.knob .dial {
  grid-area: 2 / 2;
  width: 34px;
  height: 34px;
}

.knob .right {
  grid-area: 2 / 3;
}

.knob .bottom {
  grid-area: 3 / 2;
  align-self: end;
}

.hand {
  position: absolute;
  left: 43px;
  top: 22px;
  width: 18px;
  height: 24px;
}

.ch-modes {
  align-items: center;
  margin-top: 2px;
}

.ch-modes .btn {
  width: 26px;
}

.ch-modes .btn.dash {
  width: 20px;
}

.channel-radios {
  display: flex;
  gap: 17px;
  margin-left: 21px;
}

.field-name {
  width: 58px;
  padding-left: 8px;
}

.edge {
  justify-content: flex-start;
}

.edge-btn {
  width: 29px;
  height: 19px;
  margin-left: 6px;
}

.edge-btn:nth-child(2) {
  margin-left: 9px;
}

.edge-btn svg {
  width: 12px;
  height: 12px;
}

.ext {
  display: flex;
  align-items: center;
  gap: 5px;
  margin: 0 15px 0 auto;
}

.level {
  justify-content: flex-start;
}

.level input {
  width: 114px;
  margin-left: 9px;
}

.level input.unit {
  width: 39px;
  margin-left: -1px;
  text-align: center;
}

.tr-modes {
  gap: 2px;
  margin: 18px 0 0 -2px;
}

.tr-modes .btn {
  flex: 1 1 auto;
}

/* multimeter */
.meter {
  width: 210px;
  height: 206px;
}

.meter .win-title {
  color: #979297;
  font-size: 16px;
}

.lcd-frame {
  padding: 3px;
  border: 1px solid #d5d1d6;
  border-right: 2px solid #8f8a8f;
  border-bottom: 2px solid #8f8a8f;
  background: #fefcff;
}

.lcd {
  display: block;
  height: 33px;
  border: 1px solid #8f8a8f;
  border-width: 2px 0 0 2px;
  background: #000;
  color: #f5f2f7;
  font-size: 16px;
  line-height: 19px;
  text-align: center;
}

.units {
  height: 35px;
  display: flex;
  align-items: center;
  justify-content: center;
  gap: 11px;
  margin: 8px 7px 0;
  border: 1px solid #dedadf;
}

.units .btn {
  width: 33px;
  height: 24px;
}

.acdc {
  width: 133px;
  height: 31px;
  display: flex;
  align-items: center;
  justify-content: center;
  gap: 14px;
  margin: -1px auto 0;
  border: 1px solid #dedadf;
}

.acdc .btn {
  width: 48px;
  height: 18px;
}

.acdc svg {
  width: 24px;
  height: 10px;
}

.terminals {
  display: flex;
  justify-content: space-between;
  margin: 7px 9px 0 8px;
}

.terminals label {
  display: flex;
  flex-direction: column;
  align-items: center;
  line-height: 20px;
}

.terminals label.minus {
  padding-top: 2px;
}

.set {
  width: 82px;
  margin-top: 7px;
}

/* overlay text */
.watermark {
  position: absolute;
  left: 504px;
  top: 93px;
  z-index: 5;
  display: flex;
  align-items: center;
  color: #7d787d;
  line-height: 48px;
  white-space: nowrap;
  pointer-events: none;
}

.watermark .cjk {
  font-family: "Noto Sans CJK SC", sans-serif;
  font-size: 33px;
}

.watermark .latin {
  font-family: "Liberation Mono", monospace;
  font-size: 28px;
}
</style>
